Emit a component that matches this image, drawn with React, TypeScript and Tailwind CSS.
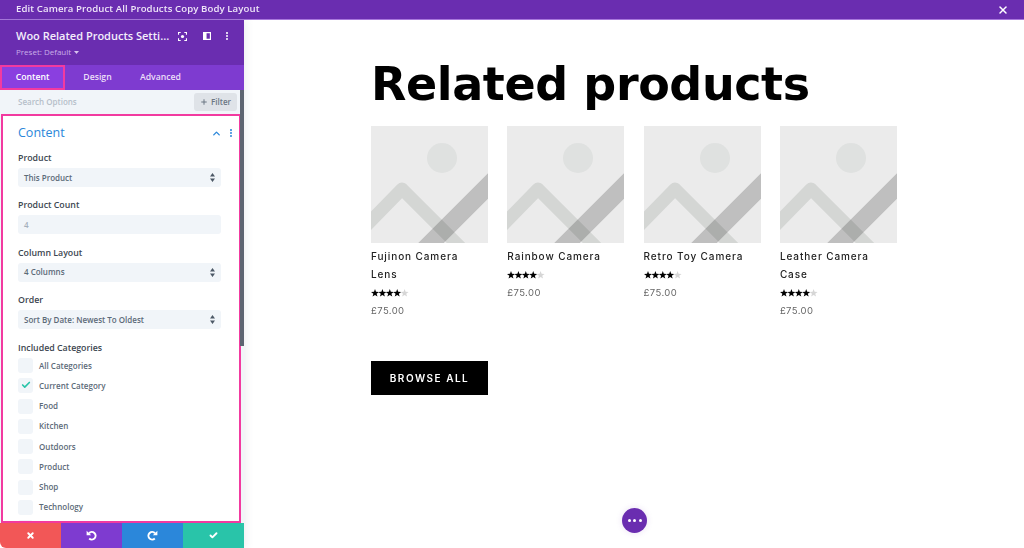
import { Check, ChevronUp, EllipsisVertical, Plus, X } from 'lucide-react';

const CATEGORIES = ['All Categories', 'Current Category', 'Food', 'Kitchen', 'Outdoors', 'Product', 'Shop', 'Technology'];

const PRODUCTS = [
  { name: 'Fujinon Camera Lens' },
  { name: 'Rainbow Camera' },
  { name: 'Retro Toy Camera' },
  { name: 'Leather Camera Case' },
];

function Arrows() {
  return (
    <svg width="5" height="9" viewBox="0 0 5 9" className="text-[#4c5866]">
      <path d="M2.5 0 5 3.4H0z M2.5 9 0 5.6h5z" fill="currentColor" />
    </svg>
  );
}

function FieldLabel({ children }: { children: string }) {
  return <div className="h-[14px] text-[8.8px] leading-[14px] font-semibold text-[#3c4650]">{children}</div>;
}

function SelectField({ label, value }: { label: string; value: string }) {
  return (
    <div className="mb-[11.4px]">
      <FieldLabel>{label}</FieldLabel>
      <div className="mt-[3px] flex h-[19px] w-[203px] items-center justify-between rounded-[3px] bg-[#f1f5f9] px-[6px] text-[8px] font-semibold text-[#5c6a78]">
        <span>{value}</span>
        <Arrows />
      </div>
    </div>
  );
}

function Placeholder() {
  return (
    <svg viewBox="0 0 117 117" className="block h-[117px] w-[117px] bg-[#ebebeb]">
      <circle cx="71" cy="32" r="15" fill="#dfe1e0" />
      <path d="M-12 107 31 63 92 124" fill="none" stroke="#d4d6d4" strokeWidth="13" strokeLinejoin="round" />
      <path d="M125 52 52 125" fill="none" stroke="#cfcfcf" strokeWidth="18" className="mix-blend-multiply" />
    </svg>
  );
}

function Stars() {
  const star = 'M4 0 5 2.8 8 2.9 5.6 4.7 6.5 7.6 4 5.9 1.5 7.6 2.4 4.7 0 2.9 3 2.8z';
  return (
    <svg width="38" height="8" viewBox="0 0 38 8" className="block">
      {[0, 1, 2, 3, 4].map((i) => (
        <path key={i} d={star} transform={`translate(${i * 7.4} 0)`} fill={i < 4 ? '#000000' : '#d6d6d6'} />
      ))}
    </svg>
  );
}

function UndoIcon({ flip }: { flip?: boolean }) {
  return (
    <svg width="11" height="11" viewBox="0 0 11 11" className={flip ? '-scale-x-100' : ''}>
      <path d="M3 3.2A3.8 3.8 0 1 1 3.2 8.6" fill="none" stroke="white" strokeWidth="2" />
      <path d="M.6.8 5.2 5.2H.6z" fill="white" />
    </svg>
  );
}

export default function App() {
  return (
    <div className="relative flex h-[548px] w-[1024px] flex-col overflow-hidden bg-white font-['Open_Sans',sans-serif]">
      <div className="flex h-[20px] shrink-0 items-center justify-between border-b border-[#a877dc] bg-[#6a2db0] pl-4 pr-[15px] text-white">
        <span className="text-[9.6px] font-semibold tracking-[0.1px] text-[#efe6f8]">Edit Camera Product All Products Copy Body Layout</span>
        <X size={12} strokeWidth={3} />
      </div>

      <div className="flex min-h-0 flex-1">
        <aside className="relative flex w-[244px] shrink-0 flex-col shadow-[2px_0_8px_rgba(80,90,120,0.1)]">
          <div className="flex h-[45px] shrink-0 items-start justify-between bg-[#6a2db0] pl-4 pr-[12px] pt-[7px]">
            <div>
              <div className="text-[11px] leading-[18px] font-semibold whitespace-nowrap text-[#f4eefb]">Woo Related Products Setti...</div>
              <div className="mt-[1px] flex items-center gap-[3px] text-[8px] leading-[12px] font-medium text-[#c9aee8]">
                Preset: Default
                <svg width="5" height="3" viewBox="0 0 5 3"><path d="M0 0h5L2.5 3z" fill="#d7c3ee" /></svg>
              </div>
            </div>
            <div className="flex items-center pt-[4px] text-white">
              <svg width="9" height="9" viewBox="0 0 10 10" fill="none" stroke="white" strokeWidth="1.2">
                <path d="M.6 3V.6H3M7 .6h2.4V3M9.4 7v2.4H7M3 9.4H.6V7" />
                <circle cx="5" cy="5" r="1.8" fill="white" stroke="none" />
              </svg>
              <svg width="8" height="8" viewBox="0 0 9 9" className="ml-[16.5px]">
                <path d="M0 0h9v9H0z M4 1.3v6.4h3.7V1.3z" fill="white" fillRule="evenodd" />
              </svg>
              <EllipsisVertical size={10} strokeWidth={3} className="ml-[11px]" />
            </div>
          </div>

          <div className="flex h-[25px] shrink-0 bg-[#7e3bd0] text-[8.7px] font-semibold text-[#ecdff9]">
            <div className="flex h-[25px] w-[65px] items-center justify-center border-2 border-[#f23aa0] bg-[#8a3fe0] text-white">Content</div>
            <div className="flex w-[65px] items-center justify-center">Design</div>
            <div className="flex w-[61px] items-center justify-center">Advanced</div>
          </div>

          <div className="flex h-[24px] shrink-0 items-center justify-between bg-[#f1f5f9] pl-[18px] pr-[7px]">
            <span className="text-[8px] font-semibold text-[#b6bfc9]">Search Options</span>
            <div className="flex h-[18px] w-[43px] items-center justify-center gap-[3px] rounded-[3px] bg-[#dfe3e8] text-[8px] font-semibold text-[#6b7683]">
              <Plus size={8} strokeWidth={3} />
              Filter
            </div>
          </div>

          <div className="flex min-h-0 flex-1 bg-[#f1f5f9]">
            <div className="ml-[1px] h-[409px] w-[240px] shrink-0 overflow-hidden border-2 border-[#f23aa0] bg-white pl-[15px] pr-[3px]">
              <div className="flex h-[32px] items-center justify-between pt-[2px]">
                <span className="text-[12.5px] text-[#2b87da]">Content</span>
                <div className="flex items-center gap-[4px] text-[#2b87da]">
                  <ChevronUp size={11} strokeWidth={3} />
                  <EllipsisVertical size={10} strokeWidth={3} />
                </div>
              </div>
              <div className="mt-[3px]">
                <SelectField label="Product" value="This Product" />
                <div className="mb-[11.4px]">
                  <FieldLabel>Product Count</FieldLabel>
                  <div className="mt-[3px] flex h-[19px] w-[203px] items-center rounded-[3px] bg-[#f1f5f9] pl-[6px] text-[8px] font-semibold text-[#a5b0bc]">4</div>
                </div>
                <SelectField label="Column Layout" value="4 Columns" />
                <SelectField label="Order" value="Sort By Date: Newest To Oldest" />
              </div>
              <FieldLabel>Included Categories</FieldLabel>
              <div className="mt-[3px] flex flex-col gap-[4.25px]">
                {CATEGORIES.map((c) => (
                  <div key={c} className="flex h-[16px] items-center gap-[6px]">
                    <div className="flex h-[15px] w-[15px] shrink-0 items-center justify-center rounded-[3px] bg-[#f1f5f9]">
                      {c === 'Current Category' && <Check size={10} strokeWidth={4} className="-translate-y-[1px] text-[#29c4a9]" />}
                    </div>
                    <span className="text-[8px] font-semibold text-[#5c6a78]">{c}</span>
                  </div>
                ))}
                <div className="h-[15px] w-[15px] shrink-0 rounded-[3px] bg-[#f1f5f9]" />
              </div>
            </div>
          </div>

          <div className="flex h-[25px] shrink-0 text-white">
            <div className="flex flex-1 items-center justify-center rounded-bl-[6px] bg-[#f25757]"><X size={9} strokeWidth={5} /></div>
            <div className="flex flex-1 items-center justify-center bg-[#7e3bd0]"><UndoIcon /></div>
            <div className="flex flex-1 items-center justify-center bg-[#2b87da]"><UndoIcon flip /></div>
            <div className="flex flex-1 items-center justify-center bg-[#29c4a9]"><Check size={9} strokeWidth={5} /></div>
          </div>

          <div className="absolute left-[240px] top-[70px] h-[256px] w-[4px] bg-[#5d6471]" />
        </aside>

        <main className="min-w-0 flex-1 pl-[127px] pt-[34px] font-['Inter',sans-serif]">
          <h1 className="font-['DejaVu_Sans',sans-serif] text-[46px] leading-[60px] font-bold tracking-[-0.4px] whitespace-nowrap text-black">Related products</h1>
          <div className="mt-[12px] flex h-[235px] w-[527px] gap-[19.3px]">
            {PRODUCTS.map((p) => (
              <div key={p.name} className="w-[117px]">
                <Placeholder />
                <div className="mt-[4px] text-[10px] leading-[18px] font-medium tracking-[0.9px] text-[#222222]">{p.name}</div>
                <div className="mt-[6px]"><Stars /></div>
                <div className="mt-[7px] text-[9.5px] leading-[14px] tracking-[0.4px] text-[#666666]">£75.00</div>
              </div>
            ))}
          </div>
          <div className="flex h-[34px] w-[117px] items-center justify-center bg-black text-[10px] font-semibold tracking-[1.5px] text-white">BROWSE ALL</div>
        </main>
      </div>

      <div className="absolute left-[622px] top-[508px] flex h-[25px] w-[25px] items-center justify-center gap-[2.5px] rounded-full bg-[#6a2db0] shadow-[0_0_6px_rgba(106,45,176,0.15)]">
        <span className="h-[3px] w-[3px] rounded-full bg-white" />
        <span className="h-[3px] w-[3px] rounded-full bg-white" />
        <span className="h-[3px] w-[3px] rounded-full bg-white" />
      </div>
    </div>
  );
}
